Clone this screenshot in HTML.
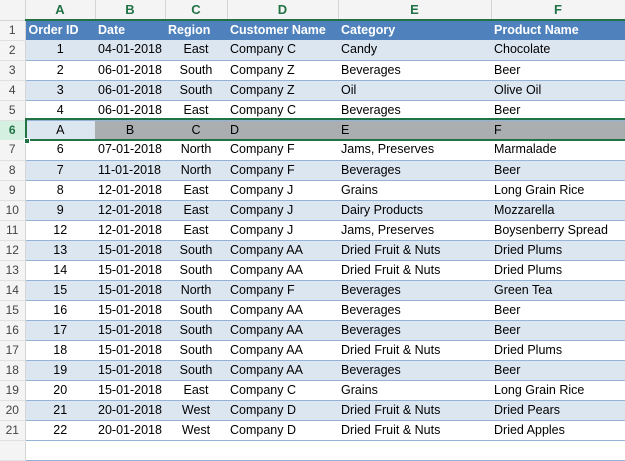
<!DOCTYPE html>
<html><head><meta charset="utf-8"><style>
*{margin:0;padding:0;box-sizing:border-box}
body{width:625px;height:443px;overflow:hidden;background:#fff;font-family:"Liberation Sans",sans-serif;font-size:12.5px;color:#000;position:relative}
table{position:absolute;left:0;top:0;border-collapse:collapse;table-layout:fixed;width:625px}
td{height:20px;line-height:19px;padding:0 0 0 3px;white-space:nowrap;overflow:hidden;border-bottom:1px solid #95b3d7;text-align:left}
td.n{text-align:center;padding:0;width:25px;color:#444;background:#f4f4f4;border-right:1px solid #d4d4d4;border-bottom:1px solid #e0e0e0;font-size:12px}
td.m{text-align:center;padding:0}
tr.h td{text-align:center;color:#217346;font-weight:bold;background:#f4f4f4;border-right:1px solid #d4d4d4;border-bottom:2px solid #217346;font-size:13px;padding:0}
tr.h td:first-child{border-bottom:1px solid #d4d4d4}
tr.t td{background:#4f81bd;color:#fff;font-weight:bold;text-align:left;padding-left:3px;border-bottom:none}
tr.t td.n{background:#f4f4f4;color:#444;font-weight:normal;text-align:center;padding:0;border-bottom:1px solid #e0e0e0}
tr.b td{background:#dce6f1}
tr.b td.n{background:#f4f4f4}
tr.s td{background:#abaeb1;border-bottom:none}
tr.s td.n{background:#d3f0e0;color:#217346;font-weight:bold}
tr.s td.a{background:#dce6f1}
</style></head><body>
<table>
<colgroup><col style="width:25px"><col style="width:70px"><col style="width:70px"><col style="width:62px"><col style="width:111px"><col style="width:153px"><col style="width:134px"></colgroup>
<tr class="h"><td></td><td>A</td><td>B</td><td>C</td><td>D</td><td>E</td><td>F</td></tr>
<tr class="t"><td class="n">1</td><td>Order ID</td><td>Date</td><td>Region</td><td>Customer Name</td><td>Category</td><td>Product Name</td></tr>
<tr class="b"><td class="n">2</td><td class="m">1</td><td>04-01-2018</td><td class="m">East</td><td>Company C</td><td>Candy</td><td>Chocolate</td></tr>
<tr><td class="n">3</td><td class="m">2</td><td>06-01-2018</td><td class="m">South</td><td>Company Z</td><td>Beverages</td><td>Beer</td></tr>
<tr class="b"><td class="n">4</td><td class="m">3</td><td>06-01-2018</td><td class="m">South</td><td>Company Z</td><td>Oil</td><td>Olive Oil</td></tr>
<tr><td class="n">5</td><td class="m">4</td><td>06-01-2018</td><td class="m">East</td><td>Company C</td><td>Beverages</td><td>Beer</td></tr>
<tr class="s"><td class="n">6</td><td class="m a">A</td><td class="m">B</td><td class="m">C</td><td>D</td><td>E</td><td>F</td></tr>
<tr><td class="n">7</td><td class="m">6</td><td>07-01-2018</td><td class="m">North</td><td>Company F</td><td>Jams, Preserves</td><td>Marmalade</td></tr>
<tr class="b"><td class="n">8</td><td class="m">7</td><td>11-01-2018</td><td class="m">North</td><td>Company F</td><td>Beverages</td><td>Beer</td></tr>
<tr><td class="n">9</td><td class="m">8</td><td>12-01-2018</td><td class="m">East</td><td>Company J</td><td>Grains</td><td>Long Grain Rice</td></tr>
<tr class="b"><td class="n">10</td><td class="m">9</td><td>12-01-2018</td><td class="m">East</td><td>Company J</td><td>Dairy Products</td><td>Mozzarella</td></tr>
<tr><td class="n">11</td><td class="m">12</td><td>12-01-2018</td><td class="m">East</td><td>Company J</td><td>Jams, Preserves</td><td>Boysenberry Spread</td></tr>
<tr class="b"><td class="n">12</td><td class="m">13</td><td>15-01-2018</td><td class="m">South</td><td>Company AA</td><td>Dried Fruit &amp; Nuts</td><td>Dried Plums</td></tr>
<tr><td class="n">13</td><td class="m">14</td><td>15-01-2018</td><td class="m">South</td><td>Company AA</td><td>Dried Fruit &amp; Nuts</td><td>Dried Plums</td></tr>
<tr class="b"><td class="n">14</td><td class="m">15</td><td>15-01-2018</td><td class="m">North</td><td>Company F</td><td>Beverages</td><td>Green Tea</td></tr>
<tr><td class="n">15</td><td class="m">16</td><td>15-01-2018</td><td class="m">South</td><td>Company AA</td><td>Beverages</td><td>Beer</td></tr>
<tr class="b"><td class="n">16</td><td class="m">17</td><td>15-01-2018</td><td class="m">South</td><td>Company AA</td><td>Beverages</td><td>Beer</td></tr>
<tr><td class="n">17</td><td class="m">18</td><td>15-01-2018</td><td class="m">South</td><td>Company AA</td><td>Dried Fruit &amp; Nuts</td><td>Dried Plums</td></tr>
<tr class="b"><td class="n">18</td><td class="m">19</td><td>15-01-2018</td><td class="m">South</td><td>Company AA</td><td>Beverages</td><td>Beer</td></tr>
<tr><td class="n">19</td><td class="m">20</td><td>15-01-2018</td><td class="m">East</td><td>Company C</td><td>Grains</td><td>Long Grain Rice</td></tr>
<tr class="b"><td class="n">20</td><td class="m">21</td><td>20-01-2018</td><td class="m">West</td><td>Company D</td><td>Dried Fruit &amp; Nuts</td><td>Dried Pears</td></tr>
<tr><td class="n">21</td><td class="m">22</td><td>20-01-2018</td><td class="m">West</td><td>Company D</td><td>Dried Fruit &amp; Nuts</td><td>Dried Apples</td></tr>
<tr><td class="n">&nbsp;</td><td></td><td></td><td></td><td></td><td></td><td></td></tr>
</table>
<div style="position:absolute;left:25px;top:118px;width:600px;height:23px;border:2px solid #217346;border-right:none"></div>
<div style="position:absolute;left:24px;top:138px;width:6px;height:6px;background:#217346;border:1px solid #fff"></div>
</body></html>
